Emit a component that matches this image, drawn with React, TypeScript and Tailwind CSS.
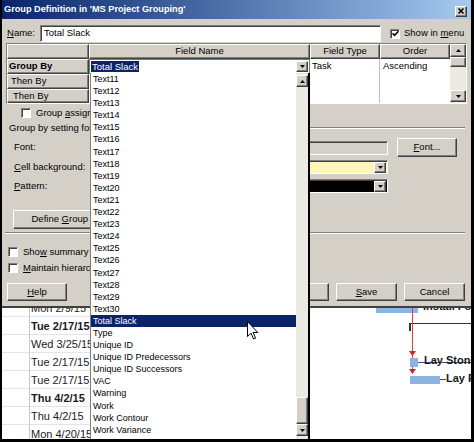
import React from 'react';

const raised =
  'border border-t-white border-l-white border-r-[#404040] border-b-[#404040] shadow-[inset_-1px_-1px_0_#808080]';
const sunken =
  'border border-t-[#808080] border-l-[#808080] border-r-white border-b-white shadow-[inset_1px_1px_0_#404040]';

const fields = [
  'Text11', 'Text12', 'Text13', 'Text14', 'Text15', 'Text16', 'Text17', 'Text18', 'Text19', 'Text20',
  'Text21', 'Text22', 'Text23', 'Text24', 'Text25', 'Text26', 'Text27', 'Text28', 'Text29', 'Text30',
  'Total Slack', 'Type', 'Unique ID', 'Unique ID Predecessors', 'Unique ID Successors', 'VAC',
  'Warning', 'Work', 'Work Contour', 'Work Variance',
];

const dates = [
  { d: 'Mon 2/9/15', b: false },
  { d: 'Tue 2/17/15', b: true },
  { d: 'Wed 3/25/15', b: false },
  { d: 'Tue 2/17/15', b: false },
  { d: 'Tue 2/17/15', b: false },
  { d: 'Thu 4/2/15', b: true },
  { d: 'Thu 4/2/15', b: false },
  { d: 'Mon 4/20/15', b: false },
];

const Check = ({ checked = false }: { checked?: boolean }) => (
  <span className={`w-[10px] h-[10px] bg-white ${sunken} flex items-center justify-center shrink-0`}>
    {checked && (
      <svg width="7" height="7" viewBox="0 0 7 7">
        <path d="M0.5 3.2 L2.6 5.3 L6.5 1.2" stroke="black" strokeWidth="1.6" fill="none" />
      </svg>
    )}
  </span>
);

const Arrow = ({ up = false, className = '' }: { up?: boolean; className?: string }) => (
  <div className={`bg-[#d4d0c8] ${raised} flex items-center justify-center shrink-0 ${className}`}>
    <svg width="5" height="3" viewBox="0 0 5 3">
      <path d={up ? 'M0 3 L2.5 0 L5 3Z' : 'M0 0 L5 0 L2.5 3Z'} fill="black" />
    </svg>
  </div>
);

const Button = ({ children, className = '' }: { children: React.ReactNode; className?: string }) => (
  <div className={`bg-[#d4d0c8] ${raised} flex items-center justify-center shrink-0 ${className}`}>{children}</div>
);

const Etched = ({ className = '' }: { className?: string }) => (
  <div className={`h-[2px] border-t border-t-[#808080] border-b border-b-white ${className}`} />
);

export default function App() {
  return (
    <div className="relative w-[474px] h-[442px] bg-black pl-[2px] pr-[3px] pb-[3px] flex flex-col overflow-hidden font-['Liberation_Sans',Arial,sans-serif] text-black">
      {/* Dialog */}
      <div className="shrink-0 flex flex-col">
        <div className="h-[19px] flex items-center bg-linear-to-r from-[#0a246a] to-[#a6caf0] pl-[2px] pr-[4px]">
          <span className="text-white font-bold text-[9.2px]">Group Definition in 'MS Project Grouping'</span>
          <div className={`ml-auto mt-[3px] w-[12px] h-[11px] bg-[#d4d0c8] ${raised} flex items-center justify-center`}>
            <svg width="6" height="6" viewBox="0 0 6 6">
              <path d="M0.5 0.5 L5.5 5.5 M5.5 0.5 L0.5 5.5" stroke="black" strokeWidth="1.5" />
            </svg>
          </div>
        </div>

        <div className="h-[289px] bg-[#d4d0c8] border-b-2 border-b-[#404040] flex flex-col text-[9.5px]">
          {/* Name row */}
          <div className="mt-[6px] h-[17px] flex items-center pl-[5px]">
            <span className="w-[33px]">
              <span className="underline">N</span>ame:
            </span>
            <div className={`w-[341px] h-[17px] bg-white ${sunken} flex items-center pl-[3px]`}>Total Slack</div>
            <div className="ml-[9px] flex items-center gap-[4px]">
              <Check checked />
              <span>
                Show in <span className="underline">m</span>enu
              </span>
            </div>
          </div>

          {/* Grid */}
          <div className="mt-[1px] ml-[4px] w-[461px] h-[61px] flex border border-[#808080] border-r-white border-b-white bg-white">
            <div className="w-[443px] flex flex-col">
              <div className="h-[15px] flex bg-[#d4d0c8]">
                <div className={`w-[82px] ${raised}`} />
                <div className={`w-[221px] ${raised} flex items-center justify-center`}>Field Name</div>
                <div className={`w-[70px] ${raised} flex items-center justify-center`}>Field Type</div>
                <div className={`w-[70px] ${raised} flex items-center justify-center`}>Order</div>
              </div>
              <div className="h-[15px] flex">
                <div className={`w-[82px] bg-[#d4d0c8] ${raised} flex items-center pl-[1px] font-bold`}>Group By</div>
                <div className="w-[221px] border border-[#4d9a4d] flex items-center">
                  <span className="ml-[1px] px-[1px] bg-[#0a246a] text-white leading-[11px]">Total Slack</span>
                  <Arrow className="ml-auto mr-[1px] w-[12px] h-[11px]" />
                </div>
                <div className="w-[70px] border-r border-[#c0c0c0] flex items-center pl-[2px]">Task</div>
                <div className="w-[70px] flex items-center pl-[3px]">Ascending</div>
              </div>
              <div className="h-[15px] flex">
                <div className={`w-[82px] bg-[#d4d0c8] ${raised} flex items-center pl-[3px]`}>Then By</div>
                <div className="w-[221px] border-r border-[#c0c0c0]" />
                <div className="w-[70px] border-r border-[#c0c0c0]" />
                <div className="w-[70px]" />
              </div>
              <div className="h-[14px] flex">
                <div className={`w-[82px] bg-[#d4d0c8] ${raised} flex items-center pl-[5px]`}>Then By</div>
                <div className="w-[221px] border-r border-[#c0c0c0]" />
                <div className="w-[70px] border-r border-[#c0c0c0]" />
                <div className="w-[70px]" />
              </div>
            </div>
            <div className="w-[16px] flex flex-col bg-[#ece9e2]">
              <Arrow up className="h-[13px]" />
              <div className={`h-[10px] bg-[#d4d0c8] ${raised}`} />
              <div className="flex-1" />
              <Arrow className="h-[12px]" />
              <div className="h-[1px]" />
            </div>
          </div>

          {/* Group assignments */}
          <div className="mt-[3px] h-[12px] flex items-center ml-[19px] gap-[5px]">
            <Check />
            <span>
              Group <span className="underline">a</span>ssignments, not tasks
            </span>
          </div>

          {/* Group by setting */}
          <div className="mt-[3px] h-[12px] flex items-center ml-[7px] mr-[6px] gap-[4px]">
            <span>Group by setting for Total Slack</span>
            <Etched className="flex-1" />
          </div>

          {/* Font */}
          <div className="mt-[4px] h-[19px] flex items-center ml-[12px]">
            <span className="w-[84px]">Font:</span>
            <div className={`w-[290px] h-[14px] ${sunken} bg-[#d4d0c8]`} />
            <Button className="ml-[9px] w-[60px] h-[19px]">
              <span>
                <span className="underline">F</span>ont...
              </span>
            </Button>
          </div>

          {/* Cell background */}
          <div className="mt-[3px] h-[14px] flex items-center ml-[12px]">
            <span className="w-[84px]">
              <span className="underline">C</span>ell background:
            </span>
            <div className={`w-[290px] h-[14px] ${sunken} bg-[#fff5b9] flex items-center justify-end pr-[1px]`}>
              <Arrow className="w-[12px] h-[11px]" />
            </div>
          </div>

          {/* Pattern */}
          <div className="mt-[5px] h-[14px] flex items-center ml-[12px]">
            <span className="w-[84px]">
              <span className="underline">P</span>attern:
            </span>
            <div className={`w-[290px] h-[14px] ${sunken} bg-black flex items-center justify-end pr-[1px]`}>
              <Arrow className="w-[12px] h-[11px]" />
            </div>
          </div>

          <Button className="mt-[17px] ml-[11px] w-[140px] h-[19px]">
            <span>
              Define <span className="underline">G</span>roup Intervals...
            </span>
          </Button>

          <Etched className="mt-[3px] ml-[3px] w-[460px]" />

          <div className="mt-[12px] h-[12px] flex items-center ml-[6px] gap-[5px]">
            <Check />
            <span>
              Sho<span className="underline">w</span> summary tasks
            </span>
          </div>
          <div className="mt-[4px] h-[12px] flex items-center ml-[6px] gap-[5px]">
            <Check />
            <span>
              <span className="underline">M</span>aintain hierarchy in current group
            </span>
          </div>

          <div className="mt-[9px] h-[18px] flex ml-[5px] mr-[6px]">
            <Button className="w-[60px] h-[18px]">
              <span>
                <span className="underline">H</span>elp
              </span>
            </Button>
            <div className="flex-1" />
            <Button className="w-[60px] h-[18px]">OK</Button>
            <Button className="ml-[7px] w-[61px] h-[18px]">
              <span>
                <span className="underline">S</span>ave
              </span>
            </Button>
            <Button className="ml-[7px] w-[61px] h-[18px]">Cancel</Button>
          </div>
        </div>
      </div>

      {/* Project view behind the dialog */}
      <div className="relative flex-1 bg-white overflow-hidden text-[11px] text-[#1a1a1a]">
        <div className="flex -mt-[9px]">
          <div className="w-[28px] border-r border-[#c8c8c8]">
            {dates.map((_, i) => (
              <div key={i} className="h-[18px] border-b border-[#e4e4e4]" />
            ))}
          </div>
          <div className="w-[280px]">
            {dates.map((r, i) => (
              <div key={i} className={`h-[18px] leading-[18px] border-b border-[#e4e4e4] pl-[1px] ${r.b ? 'font-bold' : ''}`}>
                {r.d}
              </div>
            ))}
          </div>
        </div>

        {/* Gantt */}
        <div className="absolute left-[374px] top-[-1px] w-[42px] h-[6px] bg-[#8db3e2]" />
        <div className="absolute left-[421px] top-[-8px] leading-[13px] font-bold whitespace-nowrap">Install Foundation</div>
        <div className="absolute left-[407px] top-[15px] right-0 h-[8px] border-t border-t-[#333] border-l-2 border-l-[#333]" />
        <div className="absolute left-[410px] top-0 w-px h-[65px] bg-[#e03c3c]" />
        <svg className="absolute left-[407px] top-[43px]" width="7" height="5" viewBox="0 0 7 5">
          <path d="M0 0 L7 0 L3.5 5Z" fill="#e02020" />
        </svg>
        <svg className="absolute left-[407px] top-[61px]" width="7" height="5" viewBox="0 0 7 5">
          <path d="M0 0 L7 0 L3.5 5Z" fill="#e02020" />
        </svg>
        <div className="absolute left-[416px] top-[54px] right-0 h-px bg-[#3a4f7a]" />
        <div className="absolute left-[408px] top-[50px] w-[8px] h-[9px] bg-[#8db3e2]" />
        <div className="absolute left-[422px] top-[46px] leading-[13px] font-bold whitespace-nowrap">Lay Stonework</div>
        <div className="absolute left-[408px] top-[68px] w-[30px] h-[8px] bg-[#8db3e2]" />
        <div className="absolute left-[438px] top-[71px] w-[6px] h-px bg-[#3a4f7a]" />
        <div className="absolute left-[444px] top-[64px] leading-[13px] font-bold whitespace-nowrap">Lay Roof</div>
      </div>

      {/* Open drop-down list */}
      <div className="absolute left-[90px] top-[73px] w-[220px] h-[366px] bg-white border-l border-l-[#808080] border-r-2 border-r-black flex text-[9px]">
        <div className="flex-1 flex flex-col">
          {fields.map((f) => (
            <div
              key={f}
              className={`h-[12.1px] leading-[12.1px] pl-[2px] whitespace-nowrap ${
                f === 'Total Slack' ? 'bg-[#0a246a] text-white' : ''
              }`}
            >
              {f}
            </div>
          ))}
        </div>
        <div className="w-[12px] flex flex-col bg-[#ece9e2]">
          <Arrow up className="mt-[2px] h-[12px]" />
          <div className="flex-1 flex flex-col justify-end">
            <div className={`h-[27px] bg-[#d4d0c8] ${raised}`} />
          </div>
          <Arrow className="h-[12px]" />
          <div className="h-[3px]" />
        </div>
      </div>

      {/* Mouse pointer */}
      <svg className="absolute left-[247px] top-[321px]" width="12" height="19" viewBox="0 0 12 19">
        <path d="M0.5 0.5 L0.5 15.5 L4 12.2 L6.6 18 L8.6 17.1 L6.1 11.5 L10.8 11.5 Z" fill="white" stroke="black" strokeWidth="1" />
      </svg>
    </div>
  );
}
